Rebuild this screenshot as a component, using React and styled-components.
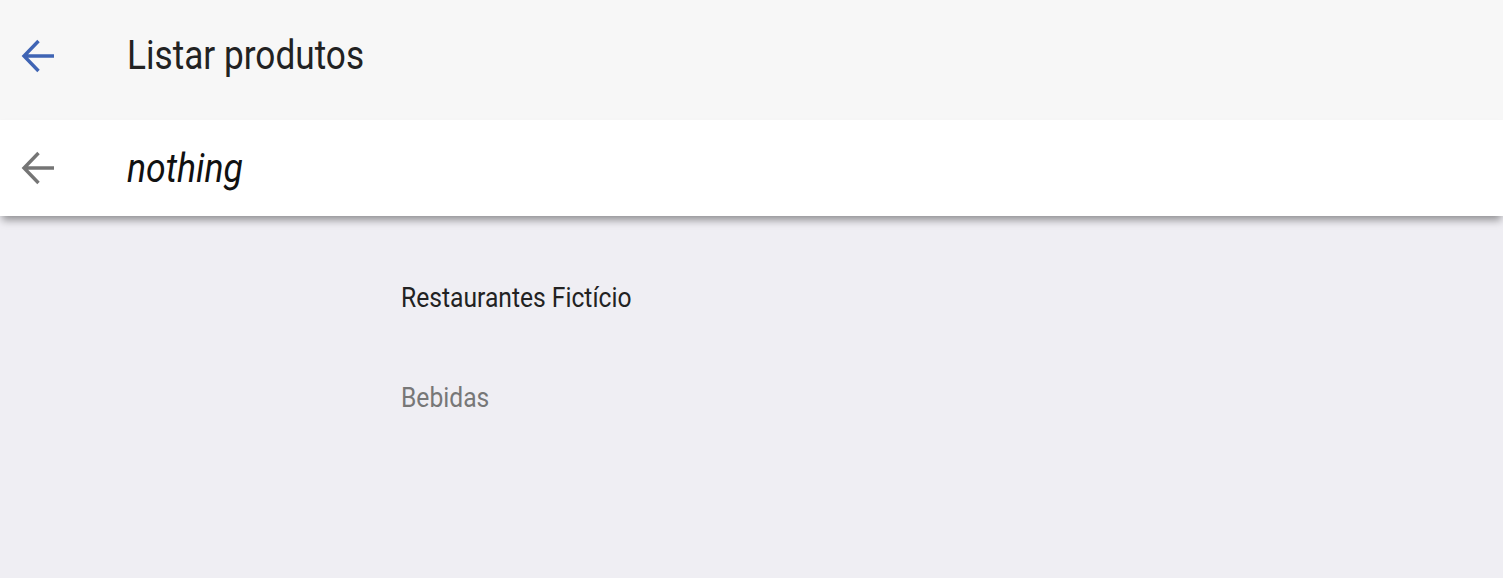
import React from 'react';
import styled, { createGlobalStyle } from 'styled-components';

const GlobalStyle = createGlobalStyle`
  html, body {
    margin: 0;
    padding: 0;
    background: #efeef3;
    font-family: Roboto, 'Liberation Sans', sans-serif;
  }
`;

/* flèche retour, dessinée au trait */
function BackArrow({ color }) {
  return (
    <svg width="48" height="48" viewBox="0 0 48 48" fill="none">
      <path
        d="M39 24H10 M23.5 9 L9 24 L23.5 39"
        stroke={color}
        strokeWidth="3.4"
        strokeLinejoin="miter"
      />
    </svg>
  );
}

function App() {
  return (
    <Page>
      <GlobalStyle />
      <TopBar>
        <IconButton><BackArrow color="#3f64b4" /></IconButton>
        <Title>Listar produtos</Title>
      </TopBar>
      <SearchBar>
        <IconButton><BackArrow color="#757575" /></IconButton>
        <SearchText>nothing</SearchText>
      </SearchBar>
      <Content>
        <Item>Restaurantes Fictício</Item>
        <Item muted>Bebidas</Item>
      </Content>
    </Page>
  );
}

const Page = styled.div`
  display: flex;
  flex-direction: column;
  width: 100vw;
  height: 100vh;
  background: #efeef3;
`;

const TopBar = styled.div`
  display: flex;
  align-items: center;
  height: 120px;
  padding: 0 0 9px 15px;
  background: #f7f7f7;
  box-sizing: border-box;
`;

const SearchBar = styled(TopBar)`
  height: 96px;
  padding-bottom: 0;
  background: #ffffff;
  box-shadow: 0 6px 8px -2px rgba(0, 0, 0, 0.4);
  position: relative;
  z-index: 1;
`;

const IconButton = styled.div`
  display: flex;
  align-items: center;
  justify-content: center;
  width: 48px;
  height: 48px;
  margin-right: 64px;
`;

const Title = styled.div`
  font-size: 40px;
  color: #222222;
  white-space: nowrap;
  transform: scaleX(0.88);
  transform-origin: left center;
`;

const SearchText = styled(Title)`
  font-style: italic;
  color: #111111;
  transform: scaleX(0.89);
`;

const Content = styled.div`
  display: flex;
  flex-direction: column;
  padding: 68px 0 0 401px;
  gap: 72px;
`;

const Item = styled.div`
  font-size: 28px;
  line-height: 28px;
  white-space: nowrap;
  color: ${p => (p.muted ? '#777777' : '#222222')};
  transform: scaleX(0.88);
  transform-origin: left center;
`;

export default App;
